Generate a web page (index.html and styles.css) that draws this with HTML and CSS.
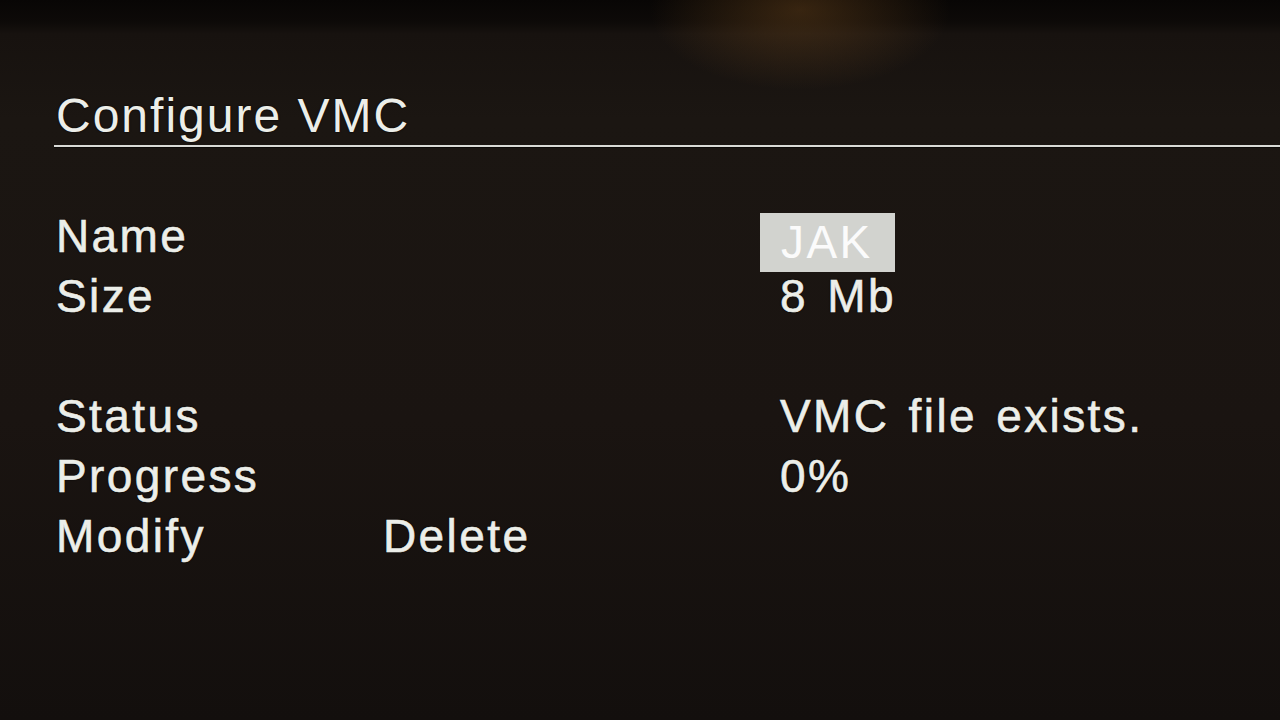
FILE: index.html
```html
<!DOCTYPE html>
<html lang="en">
<head>
  <meta charset="UTF-8" />
  <meta name="viewport" content="width=device-width, initial-scale=1.0" />
  <title>Configure VMC</title>
  <link rel="stylesheet" href="styles.css">
</head>
<body>
  <div class="screen">
    <div class="head">
      <h1>Configure VMC</h1>
    </div>

    <div class="rows">
      <div class="row">
        <span class="label">Name</span>
        <span></span>
        <span class="value"><span class="sel">JAK</span></span>
      </div>
      <div class="row">
        <span class="label">Size</span>
        <span></span>
        <span class="value">8 Mb</span>
      </div>
      <div class="row gap"></div>
      <div class="row">
        <span class="label">Status</span>
        <span></span>
        <span class="value">VMC file exists.</span>
      </div>
      <div class="row">
        <span class="label">Progress</span>
        <span></span>
        <span class="value">0%</span>
      </div>
      <div class="row">
        <span class="label">Modify</span>
        <span class="action">Delete</span>
        <span></span>
      </div>
    </div>
  </div>
</body>
</html>
```

FILE: styles.css
```css
*{box-sizing:border-box;margin:0;padding:0}
html,body{height:100%}
body{
  background:#17120f;
  font-family:"Liberation Sans",Arial,sans-serif;
  color:#eceee9;
  overflow:hidden
}
.screen{
  height:720px;
  background:
    radial-gradient(ellipse 150px 80px at 800px 10px,rgba(140,90,35,.35),rgba(140,90,35,0) 100%),
    linear-gradient(180deg,#080605 0,#0d0a08 22px,#17120f 34px,#1b1612 120px,#1a1411 420px,#130f0d 720px);
  padding-top:87px
}
.head{margin-left:54px;border-bottom:2px solid #d9dad6;box-shadow:0 1px 0 rgba(0,0,0,.5)}
h1{
  font-weight:normal;font-size:48px;line-height:58px;letter-spacing:2px;
  padding-left:2px;text-shadow:0 0 2px #000
}
.rows{margin-top:59px;padding-left:56px}
.row{
  display:grid;grid-template-columns:327px 397px 1fr;
  height:60px;font-size:46px;line-height:60px;letter-spacing:2.4px;word-spacing:4px;
  -webkit-text-stroke:.6px #eceee9;
  text-shadow:0 0 2px #000,0 0 1px #000
}
.value{white-space:nowrap}
.sel{
  display:inline-block;margin-left:-20px;padding:0 22px 0 21px;
  background:#d2d3cf;color:#fbfbfb;text-shadow:none;-webkit-text-stroke:0;
  line-height:59px;transform:translateY(6px)
}
```
